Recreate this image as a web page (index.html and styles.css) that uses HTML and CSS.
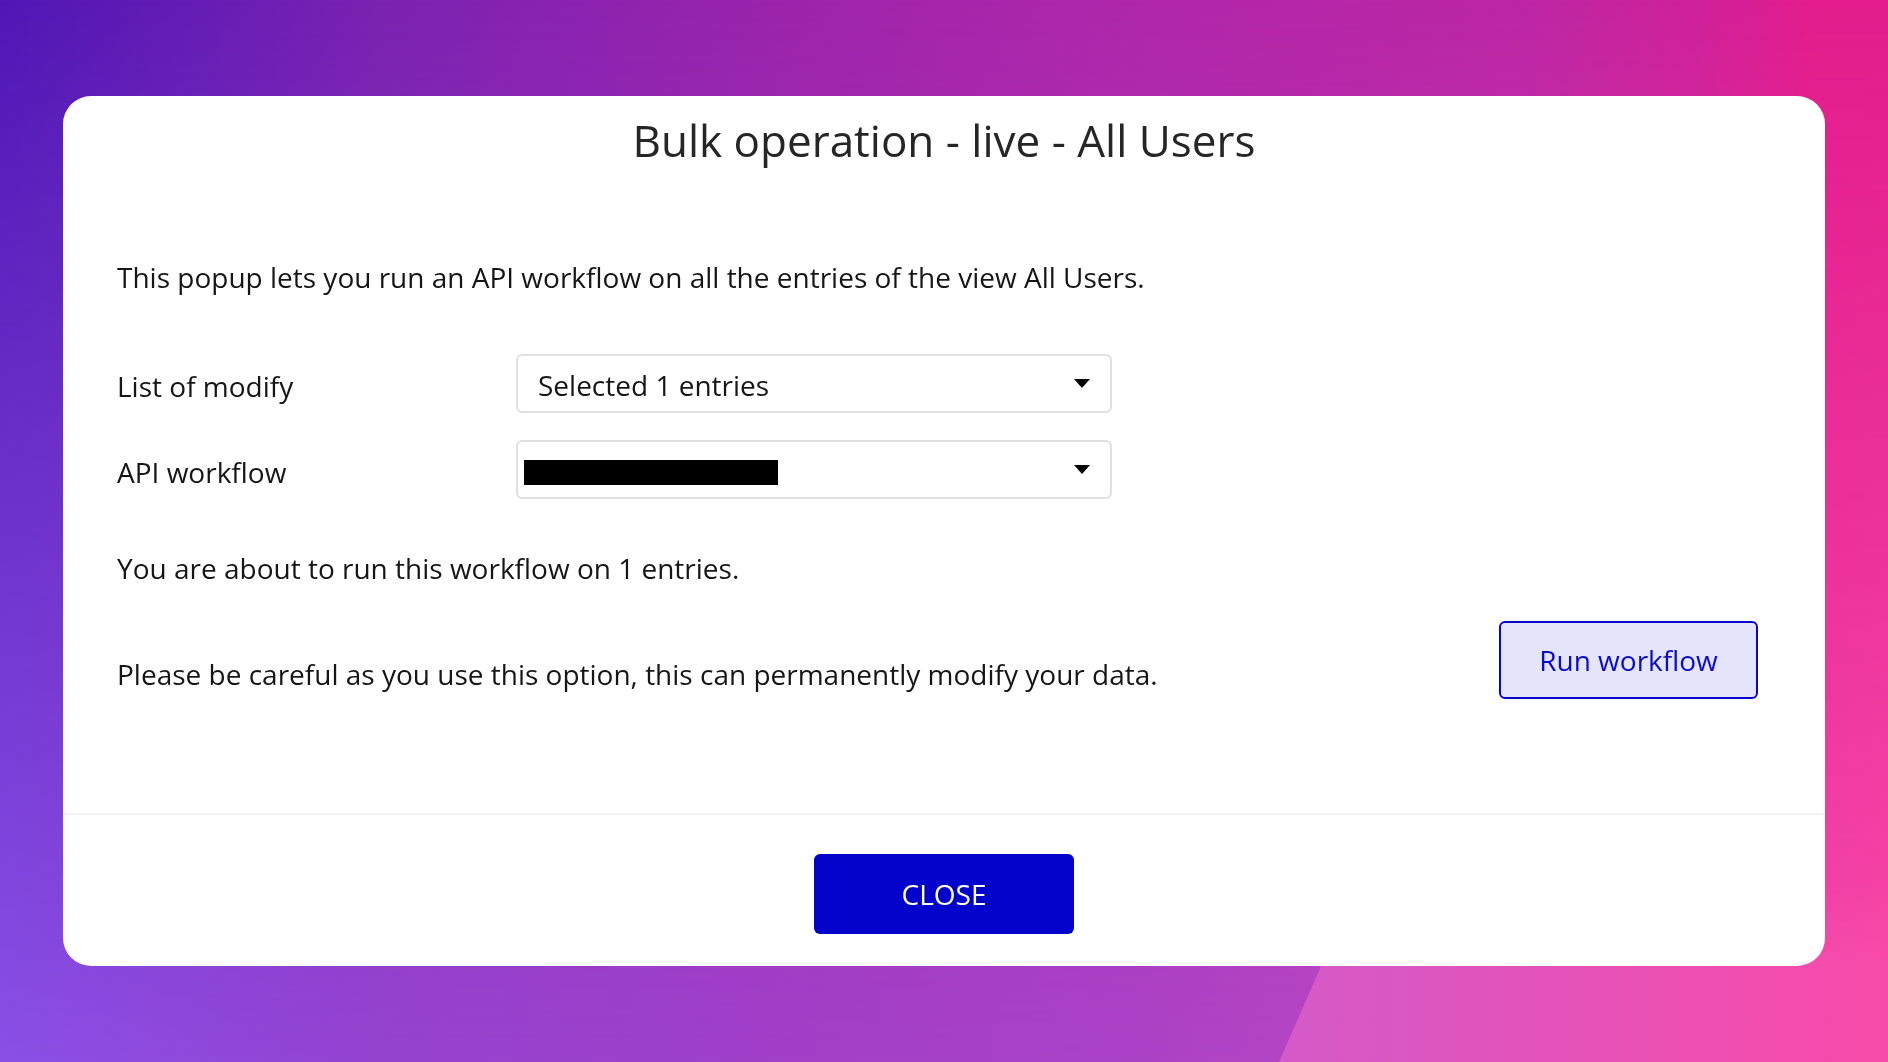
FILE: index.html
```html
<!DOCTYPE html>
<html lang="en">
<head>
<meta charset="utf-8">
<title>Bulk operation - live - All Users</title>
<link rel="stylesheet" href="styles.css">
</head>
<body>
  <div class="backdrop-bottom"></div>
  <div class="backdrop-slant"></div>
  <div class="modal">
    <h1 class="modal-title">Bulk operation - live - All Users</h1>
    <div class="modal-body">
      <p class="intro">This popup lets you run an API workflow on all the entries of the view All Users.</p>
      <div class="form">
        <div class="field">
          <span class="field-label">List of modify</span>
          <div class="select">
            <span class="select-value">Selected 1 entries</span>
            <span class="caret"></span>
          </div>
        </div>
        <div class="field">
          <span class="field-label">API workflow</span>
          <div class="select select-redacted">
            <span class="redacted"></span>
            <span class="caret"></span>
          </div>
        </div>
      </div>
      <p class="info">You are about to run this workflow on 1 entries.</p>
      <div class="action-row">
        <p class="warning">Please be careful as you use this option, this can permanently modify your data.</p>
        <button class="btn-run" type="button">Run workflow</button>
      </div>
    </div>
    <div class="modal-footer">
      <button class="btn-close" type="button">CLOSE</button>
    </div>
  </div>
</body>
</html>
```

FILE: styles.css
```css
* {
  box-sizing: border-box;
}

html {
  height: 100%;
  background: linear-gradient(to right,
    #4f17b6 0%,
    #7a22b2 20%,
    #9a24ac 40%,
    #b027aa 60%,
    #bc27a5 80%,
    #cf219a 90%,
    #e31c8c 96%,
    #e31c8c 100%);
}

body {
  margin: 0;
  height: 100vh;
  display: flex;
  align-items: center;
  justify-content: center;
  font-family: "Open Sans", "Noto Sans", sans-serif;
  color: #161616;
}

.backdrop-bottom {
  position: fixed;
  inset: 0;
  z-index: -2;
  background: linear-gradient(to right,
    #8a50e6 0%,
    #9444d2 18%,
    #a040c8 40%,
    #aa42c6 60%,
    #b546c4 70%,
    #ef44aa 92%,
    #f84aa8 100%);
  -webkit-mask-image: linear-gradient(to bottom, transparent 0%, rgba(0,0,0,0.5) 50%, #000 100%);
  mask-image: linear-gradient(to bottom, transparent 0%, rgba(0,0,0,0.5) 50%, #000 100%);
}

.backdrop-slant {
  position: fixed;
  inset: 0;
  z-index: -1;
  background: linear-gradient(to right, #d45ac8 68%, #e352b9 82%, #f84aa8 100%);
  clip-path: polygon(1279px 1062px, 1360px 877px, 1888px 877px, 1888px 1062px);
  -webkit-mask-image: linear-gradient(to bottom, transparent 0, transparent 880px, #000 960px);
  mask-image: linear-gradient(to bottom, transparent 0, transparent 880px, #000 960px);
}

.modal {
  width: 1762px;
  background: #ffffff;
  border-radius: 28px;
  display: flex;
  flex-direction: column;
  overflow: hidden;
}

.modal-title {
  margin: 16px 0 0;
  font-size: 44px;
  line-height: 57px;
  font-weight: 400;
  text-align: center;
  color: #262626;
}

.modal-body {
  padding: 90px 67px 114px 54px;
  font-size: 28px;
}

.intro,
.info,
.warning {
  margin: 0;
  line-height: 36px;
}

.form {
  margin-top: 59px;
  display: flex;
  flex-direction: column;
  gap: 27px;
}

.field {
  display: flex;
  align-items: center;
}

.field-label {
  width: 399px;
  line-height: 36px;
  padding-top: 4px;
}

.select {
  width: 596px;
  height: 59px;
  border: 2px solid #e0e0e0;
  border-radius: 6px;
  display: flex;
  align-items: center;
  justify-content: space-between;
  padding: 0 20px 0 20px;
}

.select-redacted {
  padding-left: 6px;
}

.select-value {
  line-height: 36px;
  padding-top: 3px;
  color: #161616;
}

.redacted {
  display: block;
  width: 254px;
  height: 25px;
  margin-top: 5px;
  background: #000000;
}

.caret {
  width: 0;
  height: 0;
  border-left: 8px solid transparent;
  border-right: 8px solid transparent;
  border-top: 9px solid #000000;
}

.info {
  margin-top: 51px;
}

.action-row {
  margin-top: 35px;
  display: flex;
  align-items: center;
  justify-content: space-between;
}

.warning {
  margin-top: 28px;
}

.btn-run {
  width: 259px;
  height: 78px;
  border: 2px solid #0707cc;
  border-radius: 6px;
  background: #e4e4fa;
  color: #0b0bcc;
  font-family: "Open Sans", "Noto Sans", sans-serif;
  font-size: 28px;
  padding: 0;
  cursor: pointer;
}

.modal-footer {
  border-top: 2px solid #f2f2f2;
  padding: 39px 0 32px;
  display: flex;
  justify-content: center;
}

.btn-close {
  width: 260px;
  height: 80px;
  border: none;
  border-radius: 6px;
  background: #0303cc;
  color: #ffffff;
  font-family: "Open Sans", "Noto Sans", sans-serif;
  font-size: 28px;
  padding: 0;
  cursor: pointer;
}
```
